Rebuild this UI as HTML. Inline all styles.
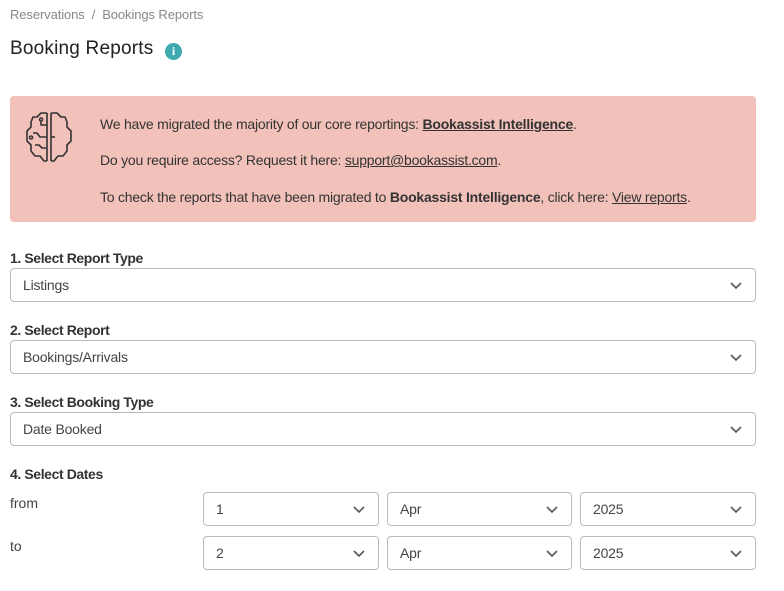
<!DOCTYPE html>
<html><head><meta charset="utf-8"><style>
body{margin:0;width:784px;height:591px;background:#fff;font-family:"Liberation Sans",sans-serif;color:#333;position:relative;overflow:hidden}
.a{position:absolute}
.crumb{left:10px;top:7px;font-size:13px;color:#888;letter-spacing:-0.1px}
h1{position:absolute;left:10px;top:38px;margin:0;font-size:19px;font-weight:normal;color:#222;letter-spacing:0.2px}
.info{left:165px;top:43px;width:17px;height:17px;border-radius:50%;background:#3fa9b0;color:#fff;font-weight:bold;font-size:12px;text-align:center;line-height:17px;font-family:"Liberation Serif",serif}
.box{left:10px;top:96px;width:746px;height:126px;background:#f2c1ba;border-radius:4px}
.box p{position:absolute;left:90px;margin:0;font-size:14px;color:#333;white-space:nowrap;letter-spacing:-0.22px}
.box a{color:#333;text-decoration:underline}
.lbl{left:10px;font-size:14px;font-weight:bold;color:#333;letter-spacing:-0.4px}
.sel{border:1px solid #bbb;border-radius:4px;box-sizing:border-box;height:34px;font-size:14px;color:#444;line-height:32px;padding-left:12px;letter-spacing:-0.2px}
.sel svg{position:absolute;right:13px;top:13px}
.dl{left:10px;font-size:14px;color:#444}
</style></head><body>
<div class="a crumb">Reservations &nbsp;/&nbsp; Bookings Reports</div>
<h1>Booking Reports</h1>
<div class="a info">i</div>
<div class="a box">
<svg class="a" style="left:16px;top:16px" width="50" height="50" viewBox="0 0 50 50" fill="none" stroke="#333" stroke-width="1.6" stroke-linejoin="round">
<path d="M21 1 V49 M25 1 V49"/>
<path d="M21 1 H15 L11 5 H7 L5 10 L5 15 L1 19 V29 L5 33 V39 L9 44 H14 L18 49 H21"/>
<path d="M25 1 H31 L35 5 H39 L41 10 L41 15 L45 19 V29 L41 33 V39 L37 44 H32 L28 49 H25"/>
<path d="M21 13 H15 V9 M15 9 a1.5 1.5 0 1 1 0.1 0"/>
<path d="M21 25 H14 L11 21 H7"/>
<path d="M5 24 a1.5 1.5 0 1 0 0.1 0"/>
<path d="M21 36 H16 L13 33 H9"/>
<path d="M25 25 H29"/>
</svg>
<p style="top:20px">We have migrated the majority of our core reportings: <a href="#"><b>Bookassist Intelligence</b></a>.</p>
<p style="top:56px">Do you require access? Request it here: <a href="#">support@bookassist.com</a>.</p>
<p style="top:93px">To check the reports that have been migrated to <b>Bookassist Intelligence</b>, click here: <a href="#">View reports</a>.</p>
</div>
<div class="a lbl" style="top:250px">1. Select Report Type</div>
<div class="a sel" style="left:10px;top:268px;width:746px">Listings<svg width="12" height="8" viewBox="0 0 12 8"><path d="M1 1l5 5 5-5" stroke="#555" stroke-width="1.6" fill="none"/></svg></div>
<div class="a lbl" style="top:322px">2. Select Report</div>
<div class="a sel" style="left:10px;top:340px;width:746px">Bookings/Arrivals<svg width="12" height="8" viewBox="0 0 12 8"><path d="M1 1l5 5 5-5" stroke="#555" stroke-width="1.6" fill="none"/></svg></div>
<div class="a lbl" style="top:394px">3. Select Booking Type</div>
<div class="a sel" style="left:10px;top:412px;width:746px">Date Booked<svg width="12" height="8" viewBox="0 0 12 8"><path d="M1 1l5 5 5-5" stroke="#555" stroke-width="1.6" fill="none"/></svg></div>
<div class="a lbl" style="top:466px">4. Select Dates</div>
<div class="a dl" style="top:495px">from</div>
<div class="a dl" style="top:538px">to</div>
<div class="a sel" style="left:203px;top:492px;width:176px">1<svg width="12" height="8" viewBox="0 0 12 8"><path d="M1 1l5 5 5-5" stroke="#555" stroke-width="1.6" fill="none"/></svg></div>
<div class="a sel" style="left:387px;top:492px;width:185px">Apr<svg width="12" height="8" viewBox="0 0 12 8"><path d="M1 1l5 5 5-5" stroke="#555" stroke-width="1.6" fill="none"/></svg></div>
<div class="a sel" style="left:580px;top:492px;width:176px">2025<svg width="12" height="8" viewBox="0 0 12 8"><path d="M1 1l5 5 5-5" stroke="#555" stroke-width="1.6" fill="none"/></svg></div>
<div class="a sel" style="left:203px;top:536px;width:176px">2<svg width="12" height="8" viewBox="0 0 12 8"><path d="M1 1l5 5 5-5" stroke="#555" stroke-width="1.6" fill="none"/></svg></div>
<div class="a sel" style="left:387px;top:536px;width:185px">Apr<svg width="12" height="8" viewBox="0 0 12 8"><path d="M1 1l5 5 5-5" stroke="#555" stroke-width="1.6" fill="none"/></svg></div>
<div class="a sel" style="left:580px;top:536px;width:176px">2025<svg width="12" height="8" viewBox="0 0 12 8"><path d="M1 1l5 5 5-5" stroke="#555" stroke-width="1.6" fill="none"/></svg></div>
</body></html>
